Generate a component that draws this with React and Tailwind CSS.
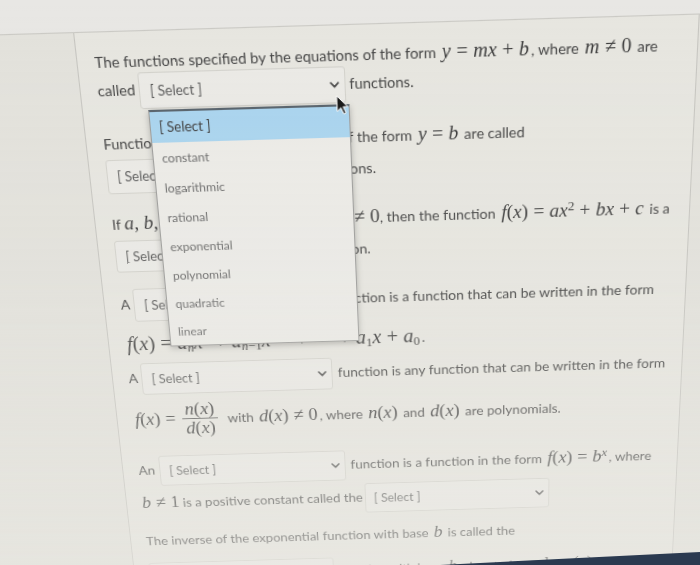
import React from 'react';

// The screenshot is a photo of a Canvas quiz, taken at an angle.
// The page itself is laid out flat; one transform on the wrapper gives the camera tilt.

const serif = "[font-family:'Liberation_Serif','Times_New_Roman',serif]";

function Chevron() {
  return (
    <svg width="9" height="6" viewBox="0 0 9 6" className="shrink-0">
      <polyline points="1,1 4.5,4.6 8,1" fill="none" stroke="#4a4a4a" strokeWidth="1.7" strokeLinecap="round" strokeLinejoin="round" />
    </svg>
  );
}

function Select({ className = '' }) {
  return (
    <span className={`inline-flex items-center justify-between align-middle rounded-[3px] border border-[#d3d2cc] bg-[#ebeae6] pl-[9px] pr-[5px] ${className}`}>
      <span className="text-[13px] leading-none text-[#5a5a5a]">[ Select ]</span>
      <Chevron />
    </span>
  );
}

// inline math; "tight" drops the extra side margin, "big" is used for the long polynomial
function M({ children, tight, big }) {
  const margin = tight ? 'mx-0' : 'mx-[2px]';
  const size = big ? 'text-[20.5px]' : 'text-[19px]';
  return <span className={`${serif} ${margin} ${size} text-[#3b3b3b]`}>{children}</span>;
}

const V = ({ children }) => <i>{children}</i>;
const Op = ({ children }) => <span className="mx-[0.27em]">{children}</span>;
const Sub = ({ children }) => <sub className="text-[13px]">{children}</sub>;
const Sup = ({ children }) => <sup className="text-[13px]">{children}</sup>;

const options = ['constant', 'logarithmic', 'rational', 'exponential', 'polynomial', 'quadratic', 'linear'];

function Dropdown() {
  return (
    <div className="absolute left-[62px] top-[72px] w-[192px] h-[235px] overflow-hidden border border-[#9c9c9a] border-t-2 border-t-[#56616b] bg-[#ecebe7] shadow-[0_2px_6px_rgba(0,0,0,0.25)]">
      <div className="flex items-center h-[29px] pl-[8px] bg-[#a9d4ef] text-[13px] text-[#3c3c3c]">[ Select ]</div>
      {options.map((o) => (
        <div key={o} className="flex items-center h-[29px] pl-[8px] text-[12px] text-[#6b6b6b]">
          {o}
        </div>
      ))}
    </div>
  );
}

function Cursor() {
  return (
    <svg width="12" height="19" viewBox="0 0 12 19" className="absolute left-[241px] top-[63px]">
      <path d="M1 1 L1 15.5 L4.6 12.2 L7.2 18 L9.3 17 L6.8 11.4 L11 11.2 Z" fill="#111" stroke="#fff" strokeWidth="1" strokeLinejoin="round" />
    </svg>
  );
}

export default function App() {
  return (
    <div className="relative w-[700px] h-[565px] overflow-hidden bg-[#e3e2dc] [font-family:Lato,'Liberation_Sans',sans-serif]">
      <div className="w-[700px] h-[565px] origin-[400px_282px] [transform:rotate(-1.7deg)_perspective(800px)_rotateX(-12.5deg)]">
        <div className="-ml-[60px] w-[820px] h-[640px] bg-[#e3e2dc]">
          <div className="h-[35px] bg-[#e8e7e4] border-b border-[#cbcac5]" />

          <div className="relative ml-[162px] w-[585px] h-[600px] border-l border-r border-[#c6c5c0] bg-[#e7e6e0] pl-[16px] pt-[15px] text-[14px] text-[#444] whitespace-nowrap">
            <div className="h-[21px] leading-[21px]">
              The functions specified by the equations of the form <M><V>y</V><Op>=</Op><V>mx</V><Op>+</Op><V>b</V></M>, where <M><V>m</V><Op>≠</Op>0</M> are
            </div>
            <div className="h-[34px] leading-[34px]">
              called<Select className="ml-[4px] w-[196px] h-[34px]" /><span className="ml-[3px]">functions.</span>
            </div>

            <div className="mt-[19px] h-[26px] leading-[26px]">
              Functions specified by the equations of the form <M><V>y</V><Op>=</Op><V>b</V></M> are called
            </div>
            <div className="h-[35px] leading-[35px]">
              <Select className="w-[196px] h-[33px]" /><span className="ml-[4px]">functions.</span>
            </div>

            <div className="mt-[17px] h-[26px] leading-[26px]">
              If <M tight><V>a</V>, <V>b</V>,</M> and <M tight><V>c</V></M> are real numbers with <M tight><V>a</V><Op>≠</Op>0</M>, then the function <M><V>f</V>(<V>x</V>)<Op>=</Op><V>ax</V><Sup>2</Sup><Op>+</Op><V>bx</V><Op>+</Op><V>c</V></M> is a
            </div>
            <div className="mt-[2px] h-[34px] leading-[34px]">
              <Select className="w-[194px] h-[32px]" /><span className="ml-[4px]">function.</span>
            </div>

            <div className="mt-[16px] h-[34px] leading-[34px]">
              A<Select className="ml-[4px] w-[196px] h-[34px]" /><span className="ml-[5px]">function is a function that can be written in the form</span>
            </div>
            <div className="mt-[9px] h-[30px] leading-[30px]">
              <M big>
                <V>f</V>(<V>x</V>)<Op>=</Op><V>a</V><Sub><V>n</V></Sub><V>x</V><Sup><V>n</V></Sup><Op>+</Op><V>a</V><Sub><V>n</V>−1</Sub><V>x</V><Sup><V>n</V>−1</Sup><Op>+</Op>⋯<Op>+</Op><V>a</V><Sub>1</Sub><V>x</V><Op>+</Op><V>a</V><Sub>0</Sub>
              </M>.
            </div>

            <div className="mt-[5px] h-[34px] leading-[34px]">
              A<Select className="ml-[4px] w-[196px] h-[34px]" /><span className="ml-[5px]">function is any function that can be written in the form</span>
            </div>
            <div className="mt-[4px] h-[48px] flex items-center">
              <M><V>f</V>(<V>x</V>)<Op>=</Op></M>
              <span className={`${serif} inline-flex flex-col items-center text-[19px] leading-[20px] text-[#3b3b3b]`}>
                <span className="px-[3px] border-b border-[#555]"><V>n</V>(<V>x</V>)</span>
                <span className="px-[3px]"><V>d</V>(<V>x</V>)</span>
              </span>
              <span className="ml-[10px]">
                with <M><V>d</V>(<V>x</V>)<Op>≠</Op>0</M>, where <M><V>n</V>(<V>x</V>)</M> and <M><V>d</V>(<V>x</V>)</M> are polynomials.
              </span>
            </div>

            <div className="mt-[15px] h-[34px] leading-[34px]">
              An<Select className="ml-[5px] w-[196px] h-[34px]" /><span className="ml-[5px]">function is a function in the form <M><V>f</V>(<V>x</V>)<Op>=</Op><V>b</V><Sup><V>x</V></Sup></M>, where</span>
            </div>
            <div className="mt-[4px] h-[34px] leading-[34px]">
              <M tight><V>b</V><Op>≠</Op>1</M> is a positive constant called the<Select className="ml-[2px] w-[196px] h-[34px]" />
            </div>

            <div className="mt-[12px] h-[30px] leading-[30px]">
              The inverse of the exponential function with base <M><V>b</V></M> is called the
            </div>
            <div className="mt-[9px] h-[34px] leading-[34px]">
              <Select className="w-[200px] h-[32px]" /><span className="ml-[5px]">function with base <M><V>b</V></M>, denoted <M><V>y</V><Op>=</Op>log<Sub><V>b</V></Sub>(<V>x</V>)</M>.</span>
            </div>

            <Dropdown />
            <Cursor />
          </div>
        </div>
      </div>

      {/* photo glare: the lower part of the screen is washed out */}
      <div className="pointer-events-none absolute inset-0 bg-linear-to-b from-transparent via-[#e6e5df]/10 to-[#e9e8e2]/55" />

      {/* monitor bezel in the bottom-right corner */}
      <svg width="700" height="565" className="pointer-events-none absolute inset-0">
        <polygon points="440,565 700,552 700,565" fill="#2b3a50" />
      </svg>
    </div>
  );
}
